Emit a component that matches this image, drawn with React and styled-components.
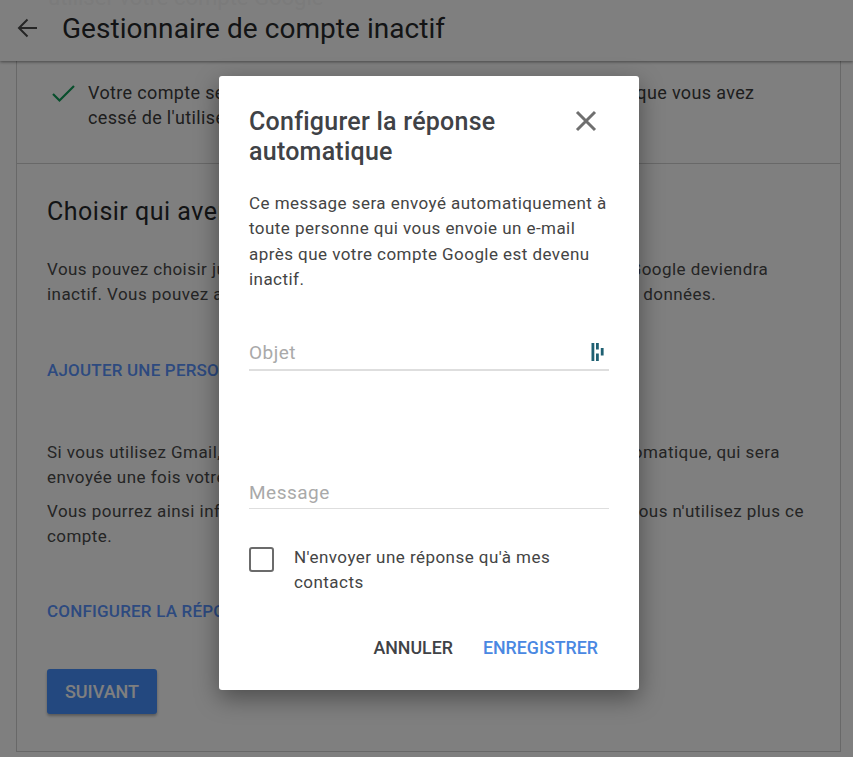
import React from 'react'
import styled, { createGlobalStyle } from 'styled-components'

const Global = createGlobalStyle`
  html, body { margin: 0; padding: 0; background: #fff; }
  body { font-family: Roboto, "Liberation Sans", sans-serif; }
`

const Page = styled.div`
  position: relative;
  width: 853px;
  height: 757px;
  overflow: hidden;
  background: #fff;
`
const Header = styled.header`
  position: relative;
  height: 61px;
  display: flex;
  align-items: center;
  gap: 22px;
  padding: 0 0 5px 16px;
  box-sizing: border-box;
  background: #fff;
  box-shadow: 0 1px 3px rgba(0, 0, 0, 0.45);
  z-index: 1;
`
const GhostText = styled.div`
  position: absolute;
  left: 48px;
  top: -15px;
  font-size: 22px;
  line-height: 26px;
  color: #f6f6f6;
  white-space: nowrap;
`
const BackBtn = styled.svg`
  width: 24px;
  height: 24px;
  fill: none;
  stroke: #4a4a4a;
  stroke-width: 2;
  flex: none;
`
const HeaderTitle = styled.h1`
  margin: 0;
  font-size: 28px;
  font-weight: 400;
  letter-spacing: 0.05px;
  color: #26282b;
  white-space: nowrap;
`
const Card = styled.main`
  margin-left: 16px;
  width: 825px;
  box-sizing: border-box;
  border-left: 1px solid #d0d0d0;
  border-right: 1px solid #d0d0d0;
`
const StatusSection = styled.section`
  display: flex;
  gap: 13px;
  height: 103px;
  box-sizing: border-box;
  padding: 19px 0 0 34px;
  border-bottom: 1px solid #d0d0d0;
`
const CheckIcon = styled.svg`
  width: 24px;
  height: 24px;
  margin-top: 1px;
  fill: none;
  stroke: #0f9d58;
  stroke-width: 2.2;
  flex: none;
`
const MainSection = styled.section`
  height: 588px;
  box-sizing: border-box;
  padding: 32px 0 0 30px;
  border-bottom: 1px solid #d0d0d0;
`
const Body = styled.p`
  margin: ${p => p.$top || 0}px 0 0;
  font-size: 17px;
  line-height: 25px;
  letter-spacing: 0.45px;
  color: #4a4a4a;
  white-space: nowrap;
`
const StatusText = styled(Body)`
  margin: 0;
  font-size: 18px;
  color: #3c3c3c;
  letter-spacing: 0.35px;
`
const SectionTitle = styled.h2`
  margin: 0;
  font-size: 25px;
  line-height: 32px;
  font-weight: 400;
  letter-spacing: 0.5px;
  color: #26282b;
  white-space: nowrap;
`
const LinkButton = styled.div`
  margin-top: ${p => p.$top}px;
  font-size: 17px;
  line-height: 20px;
  font-weight: 500;
  letter-spacing: 0.2px;
  color: #5a94ff;
  white-space: nowrap;
`
const Primary = styled.button`
  display: block;
  margin: 48px 0 0;
  width: 110px;
  height: 45px;
  border: 0;
  border-radius: 3px;
  background: #4690ff;
  color: #fff;
  font-family: inherit;
  font-size: 18px;
  font-weight: 500;
  box-shadow: 0 2px 3px rgba(0, 0, 0, 0.3);
`
const Scrim = styled.div`
  position: absolute;
  inset: 0;
  z-index: 2;
  background: rgba(0, 0, 0, 0.5);
`
const Dialog = styled.div`
  position: absolute;
  left: 219px;
  top: 76px;
  width: 420px;
  height: 614px;
  box-sizing: border-box;
  padding: 31px 30px 0;
  display: flex;
  flex-direction: column;
  background: #fff;
  border-radius: 3px;
  box-shadow: 0 8px 24px rgba(0, 0, 0, 0.4);
`
const DialogHead = styled.div`
  display: flex;
  justify-content: space-between;
  align-items: flex-start;
`
const DialogTitle = styled.h3`
  margin: 0;
  width: 290px;
  font-size: 25px;
  line-height: 30px;
  font-weight: 500;
  letter-spacing: 0.25px;
  color: #404246;
`
const CloseIcon = styled.svg`
  width: 30px;
  height: 30px;
  margin: -1px 8px 0 0;
  stroke: #6f6f6f;
  stroke-width: 3;
  fill: none;
  flex: none;
`
const DialogText = styled.p`
  margin: 24px 0 0;
  font-size: 17px;
  line-height: 25.4px;
  letter-spacing: 0.45px;
  color: #444;
`
const Field = styled.div`
  display: flex;
  align-items: flex-end;
  justify-content: space-between;
  box-sizing: border-box;
  height: ${p => p.$height}px;
  margin-top: ${p => p.$top}px;
  padding-bottom: ${p => p.$pad}px;
  border-bottom: ${p => p.$line}px solid #dedede;
`
const Placeholder = styled.span`
  font-size: 19px;
  line-height: 22px;
  letter-spacing: 0.5px;
  color: #a9a9a9;
`
const Logo = styled.svg`
  width: 14px;
  height: 18px;
  margin: 0 4px 3px 0;
  fill: #1f6072;
`
const CheckRow = styled.label`
  display: flex;
  gap: 20px;
  margin-top: 36px;
  font-size: 17px;
  line-height: 25px;
  letter-spacing: 0.45px;
  color: #444;
`
const Box = styled.span`
  width: 25px;
  height: 25px;
  box-sizing: border-box;
  border: 2px solid #6b6b6b;
  border-radius: 3px;
  margin-top: 2px;
  flex: none;
`
const Actions = styled.div`
  display: flex;
  justify-content: flex-end;
  gap: 30px;
  margin-top: 43px;
  padding-right: 11px;
`
const Action = styled.span`
  font-size: 17.8px;
  line-height: 20px;
  font-weight: 500;
  color: ${p => (p.$primary ? '#4a88e2' : '#404246')};
`

export default function App() {
  return (
    <Page>
      <Global />
      <Header>
        <GhostText>utiliser votre compte Google</GhostText>
        <BackBtn viewBox="0 0 24 24">
          <path d="M21 12H3.5M11.5 3.5L3 12l8.5 8.5" />
        </BackBtn>
        <HeaderTitle>Gestionnaire de compte inactif</HeaderTitle>
      </Header>
      <Card>
        <StatusSection>
          <CheckIcon viewBox="0 0 24 24">
            <path d="M2 13l6.5 6.5L23 5" />
          </CheckIcon>
          <StatusText>
            Votre compte sera considéré comme inactif quelque temps après que vous avez
            <br />
            cessé de l'utiliser.
          </StatusText>
        </StatusSection>
        <MainSection>
          <SectionTitle>Choisir qui avertir et quelles données partager</SectionTitle>
          <Body $top={29}>
            Vous pouvez choisir jusqu'à 10 personnes à avertir lorsque votre compte Google deviendra
            <br />
            inactif. Vous pouvez aussi leur donner accès à certaines de vos anciennes données.
          </Body>
          <LinkButton $top={53}>AJOUTER UNE PERSONNE</LinkButton>
          <Body $top={60}>
            Si vous utilisez Gmail, vous pouvez également configurer une réponse automatique, qui sera
            <br />
            envoyée une fois votre compte devenu inactif.
          </Body>
          <Body $top={9}>
            Vous pourrez ainsi informer vos correspondants et tous vos proches que vous n'utilisez plus ce
            <br />
            compte.
          </Body>
          <LinkButton $top={52}>CONFIGURER LA RÉPONSE AUTOMATIQUE</LinkButton>
          <Primary>SUIVANT</Primary>
        </MainSection>
      </Card>
      <Scrim>
        <Dialog>
          <DialogHead>
            <DialogTitle>Configurer la réponse automatique</DialogTitle>
            <CloseIcon viewBox="0 0 30 30">
              <path d="M6 6l18 18M24 6L6 24" />
            </CloseIcon>
          </DialogHead>
          <DialogText>
            Ce message sera envoyé automatiquement à toute personne qui vous envoie un e-mail après que votre compte Google est devenu inactif.
          </DialogText>
          <Field $height={50} $top={28} $line={2} $pad={5}>
            <Placeholder>Objet</Placeholder>
            <Logo viewBox="0 0 14 18">
              <rect x="0.5" y="0" width="2.8" height="18" />
              <rect x="5" y="0" width="2.8" height="6.5" />
              <rect x="5" y="10.5" width="2.8" height="7.5" />
              <rect x="9.8" y="5" width="2.8" height="7.5" />
            </Logo>
          </Field>
          <Field $height={50} $top={88} $line={1} $pad={4}>
            <Placeholder>Message</Placeholder>
          </Field>
          <CheckRow>
            <Box />
            <span>N'envoyer une réponse qu'à mes contacts</span>
          </CheckRow>
          <Actions>
            <Action>ANNULER</Action>
            <Action $primary>ENREGISTRER</Action>
          </Actions>
        </Dialog>
      </Scrim>
    </Page>
  )
}
